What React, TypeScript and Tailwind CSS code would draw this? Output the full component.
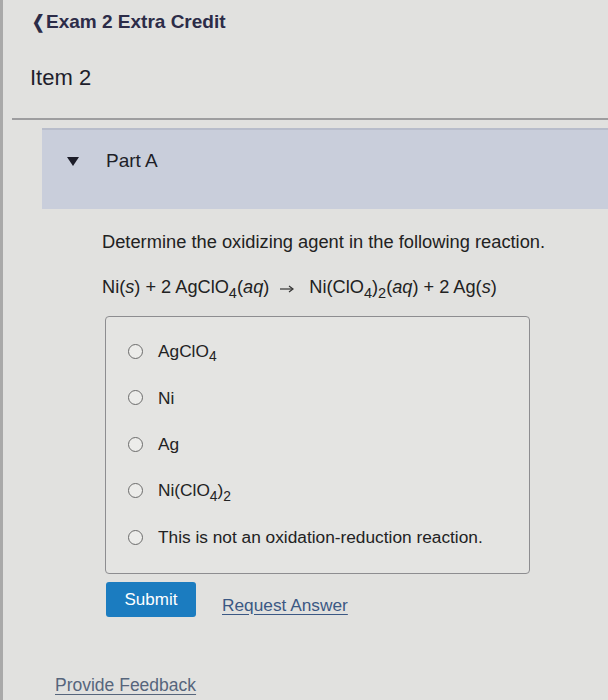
import React from "react";

const Radio = () => (
  <span className="inline-block w-[15px] h-[15px] rounded-full border-[1.5px] border-[#6b6b6b] bg-[#ececea] shrink-0" />
);

const Sub = ({ children }: { children: React.ReactNode }) => (
  <span className="text-[0.8em] relative top-[0.35em]">{children}</span>
);

const Option = ({ children }: { children: React.ReactNode }) => (
  <div className="flex items-center gap-[15px] h-[24px]">
    <Radio />
    <span className="text-[17.3px] leading-[22px] text-[#222222]">{children}</span>
  </div>
);

export default function App() {
  return (
    <div
      className="w-[608px] h-[700px] overflow-hidden bg-[#e1e1df] border-l-[3px] border-[#a9a9a9] relative"
      style={{ fontFamily: '"Liberation Sans", Arial, sans-serif' }}
    >
      <div className="pl-[29px] pt-[10px] flex items-center h-[34px]">
        <span className="text-[#2c2c48] font-bold text-[19px] leading-[22px] flex items-center">
          <span className="text-[15px] mr-[1px] scale-y-[1.2] inline-block">&#10094;</span>
          Exam 2 Extra Credit
        </span>
      </div>
      <div className="pl-[27px] pt-[31px] text-[22px] leading-[26px] text-[#1e1e2c]">Item 2</div>
      <div className="ml-[9px] mt-[27px] h-[2px] bg-[#9d9d9f]" />
      <div className="ml-[39px] mt-[8px] h-[81px] bg-[#c9cedb] border-t-[2px] border-[#b8bdcb] flex items-start pt-[20px]">
        <svg width="12" height="9" viewBox="0 0 12 9" className="ml-[25px] mt-[7px]">
          <polygon points="0,0 12,0 6,9" fill="#1c1c28" />
        </svg>
        <span className="ml-[27px] text-[19px] leading-[22px] text-[#1e1e28]">Part A</span>
      </div>
      <div className="ml-[99px] mt-[21px]">
        <div className="text-[18.3px] leading-[24px] text-[#222222]">
          Determine the oxidizing agent in the following reaction.
        </div>
        <div className="mt-[21px] text-[18.2px] leading-[24px] text-[#222222] flex items-center">
          <span>
            Ni(<i>s</i>) + 2 AgClO<Sub>4</Sub>(<i>aq</i>)
          </span>
          <svg width="14" height="8" viewBox="0 0 14 8" className="ml-[11px] mr-[15px] mt-[3px]">
            <line x1="0" y1="4" x2="12" y2="4" stroke="#333" strokeWidth="1.2" />
            <polyline points="9,1 13,4 9,7" fill="none" stroke="#333" strokeWidth="1.2" />
          </svg>
          <span>
            Ni(ClO<Sub>4</Sub>)<Sub>2</Sub>(<i>aq</i>) + 2 Ag(<i>s</i>)
          </span>
        </div>
        <div className="mt-[16px] ml-[3px] w-[425px] h-[258px] border-[1.5px] border-[#8d8d90] rounded-[4px] bg-[#e4e4e2] pl-[22px] pt-[22px] flex flex-col gap-[22.5px]">
          <Option>
            AgClO<Sub>4</Sub>
          </Option>
          <Option>Ni</Option>
          <Option>Ag</Option>
          <Option>
            Ni(ClO<Sub>4</Sub>)<Sub>2</Sub>
          </Option>
          <Option>This is not an oxidation-reduction reaction.</Option>
        </div>
        <div className="mt-[8px] ml-[4px] flex items-start">
          <button className="w-[90px] h-[35px] bg-[#1b7cc0] rounded-[3px] text-white text-[17px]">
            Submit
          </button>
          <a className="ml-[26px] mt-[12px] text-[17.3px] leading-[22px] text-[#3b5884] underline underline-offset-[3px]">
            Request Answer
          </a>
        </div>
      </div>
      <a className="absolute left-[52px] top-[672px] text-[17.5px] text-[#56657c] underline underline-offset-[3px]">
        Provide Feedback
      </a>
    </div>
  );
}
